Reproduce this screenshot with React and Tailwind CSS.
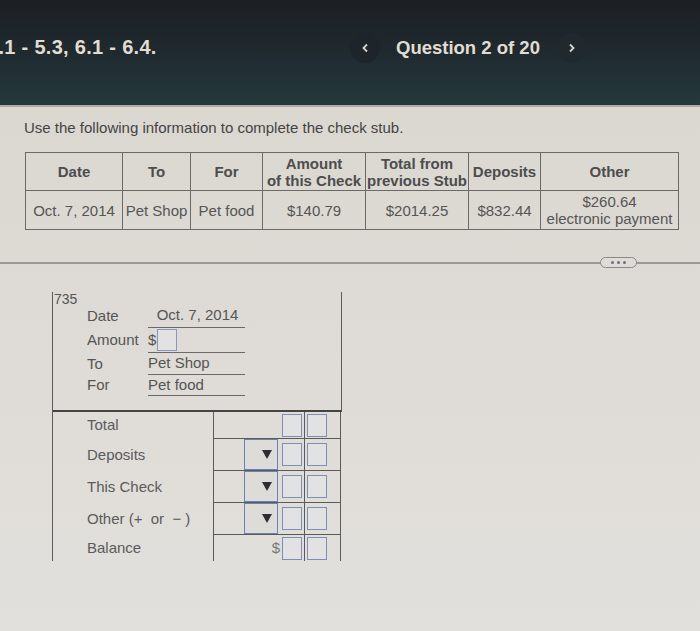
import React from "react";

function Box({ className = "" }) {
  return <div className={"w-[20px] h-[23px] border-[1.5px] border-[#7f8cb6] bg-[#e2e2e4] " + className} />;
}

function Drop() {
  return (
    <div className="w-[34px] h-[31px] border-[1.5px] border-[#6f7fb2] flex items-center justify-end pr-[5px] bg-[#dedcd9]">
      <svg width="10" height="9" viewBox="0 0 10 9">
        <polygon points="0,0 10,0 5,9" fill="#2f2f33" />
      </svg>
    </div>
  );
}

function Row({ label, h, drop, dollar, last }) {
  return (
    <div className="flex" style={{ height: h }}>
      <div className="w-[161px] border-r-[1.5px] border-[#5a5a5a] flex items-center pl-[34px] text-[15px] text-[#5b5b5b] whitespace-pre">
        {label}
      </div>
      <div className={"w-[91px] flex items-center justify-end gap-[4px] pr-[2px] border-r-[1.5px] border-[#5a5a5a] " + (last ? "" : "border-b-[1.5px]")}>
        {drop && <Drop />}
        {dollar && <span className="text-[15px] text-[#777] mr-[-2px]">$</span>}
        <Box />
      </div>
      <div className={"w-[36px] flex items-center pl-[2px] border-r-[1.5px] border-[#5a5a5a] " + (last ? "" : "border-b-[1.5px]")}>
        <Box />
      </div>
    </div>
  );
}

export default function App() {
  const th = "border-[1.5px] border-[#6a6a6a] font-bold text-[15px] leading-[17px] text-[#4d4d4d] text-center p-0";
  const td = "border-[1.5px] border-[#6a6a6a] text-[15px] leading-[17px] text-[#555] text-center p-0";
  return (
    <div className="w-[700px] h-[631px] overflow-hidden bg-linear-to-b from-[#d9d5ce] via-[#dedbd6] to-[#e2e0dc] font-['Liberation_Sans',Arial,sans-serif]">
      <header className="h-[107px] bg-linear-to-b from-[#1c1f24] via-[#1f2a2f] to-[#25393d] border-b-2 border-[#aeaba4] flex items-start pt-[33px]">
        <div className="w-[350px] overflow-hidden">
          <div className="ml-[-13px] text-[20px] tracking-[0.3px] font-bold text-[#e2ddd2] leading-[28px] whitespace-nowrap">
            5.1 - 5.3, 6.1 - 6.4.
          </div>
        </div>
        <div className="flex items-center">
          <div className="w-[30px] h-[30px] rounded-full bg-[#1e252a] flex items-center justify-center">
            <svg width="8" height="12" viewBox="0 0 8 12">
              <polyline points="6,2.5 2.5,6 6,9.5" fill="none" stroke="#d8d4cc" strokeWidth="1.8" />
            </svg>
          </div>
          <div className="ml-[16px] text-[18.5px] font-bold text-[#e2ddd2] leading-[28px] whitespace-nowrap">Question 2 of 20</div>
          <div className="w-[30px] h-[30px] rounded-full bg-[#20292e] flex items-center justify-center ml-[17px]">
            <svg width="8" height="12" viewBox="0 0 8 12">
              <polyline points="2,2.5 5.5,6 2,9.5" fill="none" stroke="#d8d4cc" strokeWidth="1.8" />
            </svg>
          </div>
        </div>
      </header>

      <div className="pl-[24px] pt-[12px] text-[15px] leading-[18px] text-[#444]">
        Use the following information to complete the check stub.
      </div>

      <table className="ml-[25px] mt-[15px] border-collapse table-fixed w-[653px]">
        <colgroup>
          <col className="w-[97px]" />
          <col className="w-[68px]" />
          <col className="w-[72px]" />
          <col className="w-[103px]" />
          <col className="w-[103px]" />
          <col className="w-[72px]" />
          <col className="w-[138px]" />
        </colgroup>
        <thead>
          <tr className="h-[38px]">
            <th className={th}>Date</th>
            <th className={th}>To</th>
            <th className={th}>For</th>
            <th className={th}>Amount<br />of this Check</th>
            <th className={th}>Total from<br />previous Stub</th>
            <th className={th}>Deposits</th>
            <th className={th}>Other</th>
          </tr>
        </thead>
        <tbody>
          <tr className="h-[39px]">
            <td className={td + " whitespace-nowrap"}>Oct. 7, 2014</td>
            <td className={td + " whitespace-nowrap"}>Pet Shop</td>
            <td className={td}>Pet food</td>
            <td className={td}>$140.79</td>
            <td className={td}>$2014.25</td>
            <td className={td}>$832.44</td>
            <td className={td}>$260.64<br />electronic payment</td>
          </tr>
        </tbody>
      </table>

      <div className="relative mt-[32px] h-[2px] bg-[#9a9894]">
        <div className="absolute left-[600px] top-[-5px] w-[37px] h-[11px] rounded-full border-[1.5px] border-[#8a8884] bg-[#dedcd8] flex items-center justify-center gap-[3px]">
          <span className="w-[3px] h-[3px] rounded-full bg-[#6f6f7a]" />
          <span className="w-[3px] h-[3px] rounded-full bg-[#6f6f7a]" />
          <span className="w-[3px] h-[3px] rounded-full bg-[#6f6f7a]" />
        </div>
      </div>

      <div className="ml-[52px] mt-[28px] w-[290px] border-l-[1.5px] border-[#5a5a5a]">
        <div className="h-[120px] border-r-[1.5px] border-[#5a5a5a] border-b-2 border-b-[#444]">
          <div className="text-[14px] leading-[15px] text-[#555] pl-[1px]">735</div>
          <div className="ml-[34px] mt-[1px] grid grid-cols-[61px_97px] text-[15px] text-[#555]">
            <div className="h-[20px] flex items-end pb-[1px]">Date</div>
            <div className="h-[20px] border-b-[1.5px] border-[#6a6a6a] flex items-end justify-center pb-[1px] pl-[2px]">Oct. 7, 2014</div>
            <div className="h-[25px] flex items-center">Amount</div>
            <div className="h-[25px] border-b-[1.5px] border-[#6a6a6a] flex items-center gap-[1px]">
              <span>$</span>
              <div className="w-[20px] h-[22px] border-[1.5px] border-[#8a96be] bg-[#e2e2e4]" />
            </div>
            <div className="h-[22px] flex items-center">To</div>
            <div className="h-[22px] border-b-[1.5px] border-[#6a6a6a] flex items-center">Pet Shop</div>
            <div className="h-[21px] flex items-center">For</div>
            <div className="h-[21px] border-b-[1.5px] border-[#6a6a6a] flex items-center">Pet food</div>
          </div>
        </div>
        <Row label="Total" h={27} />
        <Row label="Deposits" h={32} drop />
        <Row label="This Check" h={32} drop />
        <Row label={"Other (+  or  − )"} h={32} drop />
        <Row label="Balance" h={26} dollar last />
      </div>
    </div>
  );
}
